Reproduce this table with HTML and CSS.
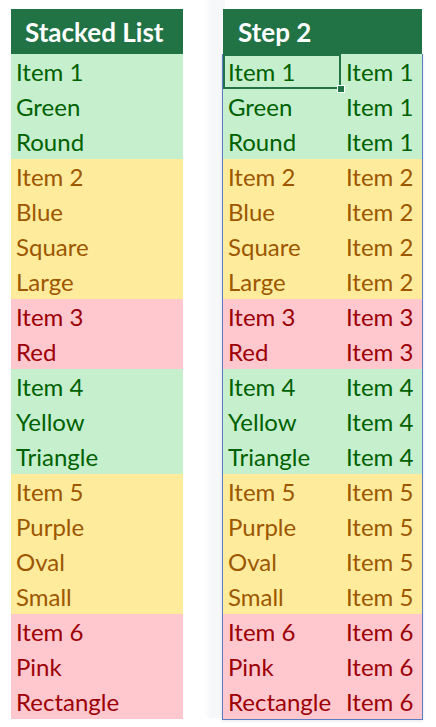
FILE: index.html
```html
<!DOCTYPE html>
<html>
<head>
<meta charset="utf-8">
<link rel="stylesheet" href="styles.css">
</head>
<body>
<div class="page">
  <div class="table left">
    <div class="head">Stacked List</div>
    <div class="cell g">Item 1</div>
    <div class="cell g">Green</div>
    <div class="cell g">Round</div>
    <div class="cell y">Item 2</div>
    <div class="cell y">Blue</div>
    <div class="cell y">Square</div>
    <div class="cell y">Large</div>
    <div class="cell r">Item 3</div>
    <div class="cell r">Red</div>
    <div class="cell g">Item 4</div>
    <div class="cell g">Yellow</div>
    <div class="cell g">Triangle</div>
    <div class="cell y">Item 5</div>
    <div class="cell y">Purple</div>
    <div class="cell y">Oval</div>
    <div class="cell y">Small</div>
    <div class="cell r">Item 6</div>
    <div class="cell r">Pink</div>
    <div class="cell r">Rectangle</div>
  </div>
  <div class="gutter"></div>
  <div class="table right">
    <div class="head">Step 2</div>
    <div class="body">
      <div class="cell g sel">Item 1<span class="handle"></span></div><div class="cell g">Item 1</div>
      <div class="cell g">Green</div><div class="cell g">Item 1</div>
      <div class="cell g">Round</div><div class="cell g">Item 1</div>
      <div class="cell y">Item 2</div><div class="cell y">Item 2</div>
      <div class="cell y">Blue</div><div class="cell y">Item 2</div>
      <div class="cell y">Square</div><div class="cell y">Item 2</div>
      <div class="cell y">Large</div><div class="cell y">Item 2</div>
      <div class="cell r">Item 3</div><div class="cell r">Item 3</div>
      <div class="cell r">Red</div><div class="cell r">Item 3</div>
      <div class="cell g">Item 4</div><div class="cell g">Item 4</div>
      <div class="cell g">Yellow</div><div class="cell g">Item 4</div>
      <div class="cell g">Triangle</div><div class="cell g">Item 4</div>
      <div class="cell y">Item 5</div><div class="cell y">Item 5</div>
      <div class="cell y">Purple</div><div class="cell y">Item 5</div>
      <div class="cell y">Oval</div><div class="cell y">Item 5</div>
      <div class="cell y">Small</div><div class="cell y">Item 5</div>
      <div class="cell r">Item 6</div><div class="cell r">Item 6</div>
      <div class="cell r">Pink</div><div class="cell r">Item 6</div>
      <div class="cell r">Rectangle</div><div class="cell r">Item 6</div>
    </div>
  </div>
</div>
</body>
</html>
```
FILE: styles.css
```css
html, body {
  margin: 0;
  padding: 0;
  background: #ffffff;
}
body {
  font-family: Lato, "Open Sans", sans-serif;
  width: 436px;
  height: 727px;
  overflow: hidden;
}
.page {
  display: flex;
  padding: 9px 0 0 11px;
  align-items: flex-start;
}
.table {
  display: flex;
  flex-direction: column;
}
.left {
  width: 172px;
}
.gutter {
  width: 21px;
  margin-left: 21px;
  margin-right: -2px;
  height: 718px;
  margin-top: -9px;
  background: linear-gradient(to right, #ffffff, #f6f7f9 40%, #f7f8fa 100%);
}
.right {
  width: 199px;
  position: relative;
}
.head {
  height: 45px;
  box-sizing: border-box;
  background: #217346;
  color: #ffffff;
  font-weight: 700;
  font-size: 26px;
  padding: 2px 0 0 14px;
  line-height: 43px;
}
.right .head {
  padding-left: 15px;
}
.body {
  display: grid;
  grid-template-columns: 118px 81px;
  border: 1px solid #5b7bc4;
  border-top: none;
  margin-left: -1px;
  width: 199px;
  box-shadow: 0 1px 3px rgba(120, 130, 160, 0.2);
}
.cell {
  height: 35px;
  box-sizing: border-box;
  font-size: 24px;
  line-height: 33px;
  padding: 1px 0 0 5px;
  white-space: nowrap;
  position: relative;
}
.right .cell {
  padding-left: 5px;
}
.g { background: #c6efce; color: #006100; }
.y { background: #ffeb9c; color: #9c5700; }
.r { background: #ffc7ce; color: #9c0006; }
.sel {
  box-shadow: inset 0 0 0 2px #217346;
}
.handle {
  position: absolute;
  right: -4px;
  bottom: -4px;
  width: 8px;
  height: 8px;
  background: #217346;
  border: 1px solid #ffffff;
  box-sizing: border-box;
  z-index: 2;
}
```
